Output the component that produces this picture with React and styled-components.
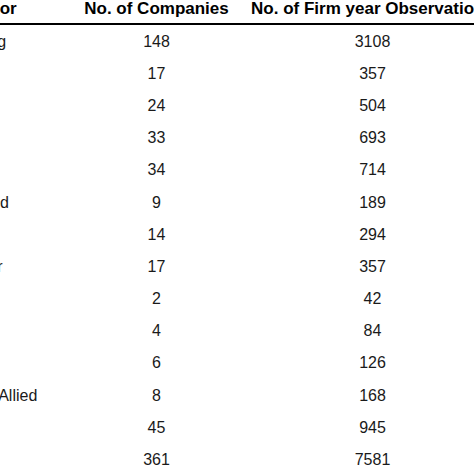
import React from 'react';
import styled, { createGlobalStyle } from 'styled-components';

const GlobalStyle = createGlobalStyle`
  html, body {
    margin: 0;
    padding: 0;
    background: #fff;
    overflow: hidden;
  }
  body {
    font-family: "Liberation Sans", Arial, sans-serif;
    color: #1a1a1a;
  }
`;

const Viewport = styled.div`
  width: 474px;
  height: 474px;
  overflow: hidden;
`;

// first column starts off-screen, like the cropped figure
const Table = styled.div`
  margin-left: -88px;
  width: 590px;
  display: grid;
  grid-template-columns: 158px 173px 259px;
`;

const HeaderRow = styled.div`
  display: contents;
`;

const HeadCell = styled.div`
  height: 25px;
  border-bottom: 2px solid #000;
  font-size: 17px;
  font-weight: 700;
  line-height: 17px;
  color: #000;
  white-space: nowrap;
  text-align: ${p => (p.$left ? 'left' : 'center')};
  padding-left: ${p => (p.$left ? '15px' : '0')};
  box-sizing: border-box;
`;

const Cell = styled.div`
  height: 32.2px;
  display: flex;
  align-items: center;
  justify-content: ${p => (p.$left ? 'flex-start' : 'center')};
  padding-left: ${p => (p.$left ? '15px' : '0')};
  padding-top: 1px;
  font-size: 16px;
  white-space: nowrap;
  box-sizing: border-box;
`;

const ROWS = [
  ['Processing', 148, 3108],
  ['Chemical', 17, 357],
  ['Cement', 24, 504],
  ['Textiles', 33, 693],
  ['Fuel', 34, 714],
  ['Specialized', 9, 189],
  ['Glass', 14, 294],
  ['Assembler', 17, 357],
  ['Leather', 2, 42],
  ['Jute', 4, 84],
  ['Paper', 6, 126],
  ['Food and Allied', 8, 168],
  ['Others', 45, 945],
  ['Total', 361, 7581],
];

export default function App() {
  return (
    <Viewport>
      <GlobalStyle />
      <Table>
        <HeaderRow>
          <HeadCell $left>Sub Sector</HeadCell>
          <HeadCell>No. of Companies</HeadCell>
          <HeadCell>No. of Firm year Observations</HeadCell>
        </HeaderRow>
        {ROWS.map(([label, companies, obs]) => (
          <React.Fragment key={label}>
            <Cell $left>{label}</Cell>
            <Cell>{companies}</Cell>
            <Cell>{obs}</Cell>
          </React.Fragment>
        ))}
      </Table>
    </Viewport>
  );
}
